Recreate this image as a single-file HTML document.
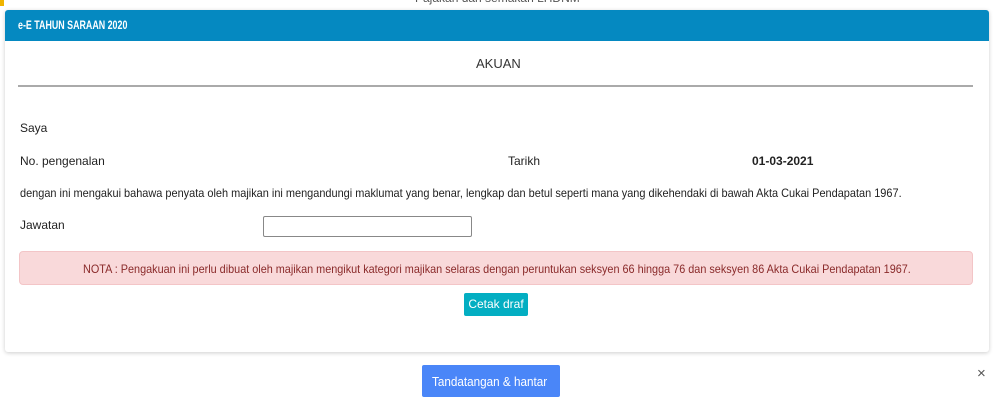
<!DOCTYPE html>
<html><head><style>
body{margin:0;width:1000px;height:419px;background:#fff;font-family:"Liberation Sans",sans-serif;position:relative;overflow:hidden;color:#222}
.a{position:absolute;white-space:nowrap}
.s{transform-origin:left top}
</style></head><body>
<div class="a" style="left:0;top:0;width:4px;height:6px;background:#f0b400"></div>
<div class="a" style="left:415px;top:-9px;font-size:12px;color:#555">Pajakan dan semakan LHDNM</div>
<div class="a" style="left:5px;top:10px;width:984px;height:342px;background:#fff;border-radius:3px;box-shadow:0 1px 4px rgba(0,0,0,.2)"></div>
<div class="a" style="left:5px;top:10px;width:984px;height:31px;background:#0589c1;border-radius:3px 3px 0 0"></div>
<div class="a s" style="left:18px;top:18px;font-size:12px;font-weight:bold;color:#fff;transform:scaleX(0.74)">e-E TAHUN SARAAN 2020</div>
<div class="a" style="left:476px;top:56px;font-size:13px;color:#333">AKUAN</div>
<div class="a" style="left:18px;top:85px;width:955px;height:2px;background:#aaa"></div>
<div class="a" style="left:20px;top:121px;font-size:12px">Saya</div>
<div class="a" style="left:20px;top:154px;font-size:12px">No. pengenalan</div>
<div class="a" style="left:508px;top:154px;font-size:12px">Tarikh</div>
<div class="a" style="left:752px;top:154px;font-size:12px;font-weight:bold">01-03-2021</div>
<div class="a s" style="left:20px;top:186px;font-size:12px;transform:scaleX(0.912)">dengan ini mengakui bahawa penyata oleh majikan ini mengandungi maklumat yang benar, lengkap dan betul seperti mana yang dikehendaki di bawah Akta Cukai Pendapatan 1967.</div>
<div class="a" style="left:20px;top:218px;font-size:12px">Jawatan</div>
<div class="a" style="left:263px;top:216px;width:207px;height:19px;border:1px solid #888;border-radius:2px"></div>
<div class="a" style="left:19px;top:251px;width:954px;height:34px;background:#f9d9da;border:1px solid #f3c5c7;border-radius:4px;box-sizing:border-box"></div>
<div class="a s" style="left:83px;top:262px;font-size:12px;color:#8a2a2a;transform:scaleX(0.904)">NOTA : Pengakuan ini perlu dibuat oleh majikan mengikut kategori majikan selaras dengan peruntukan seksyen 66 hingga 76 dan seksyen 86 Akta Cukai Pendapatan 1967.</div>
<div class="a" style="left:464px;top:293px;width:64px;height:23px;background:#03aec2;border-radius:2px;color:#fff;font-size:12px;line-height:23px;text-align:center">Cetak draf</div>
<div class="a" style="left:422px;top:365px;width:138px;height:32px;background:#4a86f8;border-radius:2px"></div>
<div class="a s" style="left:432px;top:374px;color:#fff;font-size:13px;transform:scaleX(0.9)">Tandatangan &amp; hantar</div>
<div class="a" style="left:977px;top:365px;font-size:15px;color:#555">×</div>
</body></html>
